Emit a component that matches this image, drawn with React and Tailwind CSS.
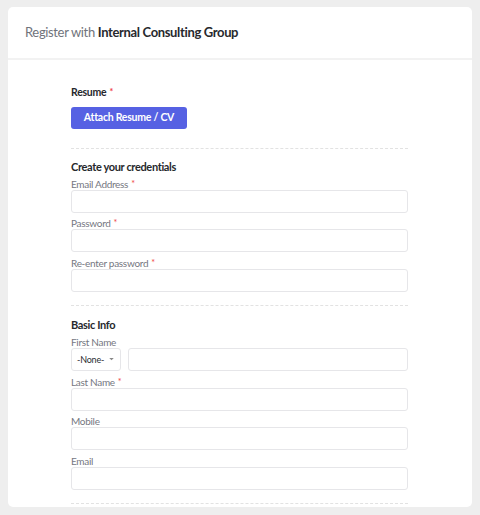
import React from "react";

const font = { fontFamily: "Lato, 'Open Sans', sans-serif" };

function Star() {
  return <span className="ml-[3px] align-top text-[9px] tracking-normal text-[#ef4444]">*</span>;
}

function Label({ children, required, gap }) {
  return (
    <div className={`${gap ? "mt-[5px]" : "mt-[4px]"} text-[10px] leading-[12px] tracking-[-0.3px] text-[#75777f]`}>
      {children}
      {required && <Star />}
    </div>
  );
}

function Input() {
  return <div className="h-[23px] w-full rounded-[3px] border border-[#e6e6e9] bg-white" />;
}

function Field({ label, required, gap }) {
  return (
    <div className="flex flex-col">
      <Label required={required} gap={gap}>{label}</Label>
      <Input />
    </div>
  );
}

function Sep() {
  return <div className="border-t border-dashed border-[#e2e2e2]" />;
}

export default function App() {
  return (
    <div className="min-h-[515px] bg-[#eeeeee] px-2 pt-[7px] pb-2" style={font}>
      <div className="rounded-[5px] bg-white">
        <div className="flex h-[53px] items-center border-b-2 border-[#f2f2f2] px-[17px] text-[13px] tracking-[-0.35px] text-[#70737b]">
          Register with&nbsp;<span className="font-bold text-[#27292d]">Internal Consulting Group</span>
        </div>
        <div className="pl-[63px] pr-[64px] pt-[24px] pb-[3px]">
          <div className="text-[10.5px] leading-[16px] tracking-[-0.25px] font-bold text-[#26282c]">
            Resume
            <Star />
          </div>
          <button className="mt-[7px] h-[22px] w-[116px] rounded-[3px] bg-[#5661e3] text-[10.5px] tracking-[-0.25px] font-bold text-white">
            Attach Resume / CV
          </button>
          <div className="mt-[19px]">
            <Sep />
          </div>
          <div className="mt-[10px] text-[11px] leading-[15px] tracking-[-0.35px] font-bold text-[#26282c]">Create your credentials</div>
          <div className="flex flex-col">
            <Field label="Email Address" required />
            <Field label="Password" required />
            <Field label="Re-enter password" required gap />
          </div>
          <div className="mt-[13px]">
            <Sep />
          </div>
          <div className="mt-[11px] text-[11px] leading-[15px] tracking-[-0.35px] font-bold text-[#26282c]">Basic Info</div>
          <div className="flex flex-col">
            <div className="flex flex-col">
              <Label>First Name</Label>
              <div className="flex gap-[7px]">
                <div className="flex h-[23px] w-[50px] shrink-0 items-center justify-between rounded-[3px] border border-[#e6e6e9] pl-[5px] pr-[6px] text-[9px] tracking-[-0.2px] whitespace-nowrap text-[#2b2d31]">
                  <span>-None-</span>
                  <svg width="5" height="3" viewBox="0 0 6 4"><path d="M0 0h6L3 3z" fill="#888" /></svg>
                </div>
                <Input />
              </div>
            </div>
            <Field label="Last Name" required gap />
            <Field label="Mobile" />
            <Field label="Email" gap />
          </div>
          <div className="mt-[13px]">
            <Sep />
          </div>
        </div>
      </div>
    </div>
  );
}
